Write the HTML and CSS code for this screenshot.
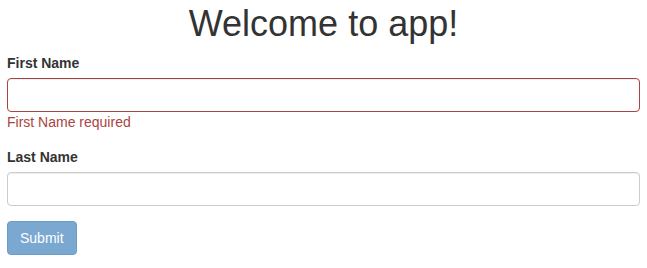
FILE: index.html
```html
<!DOCTYPE html>
<html>
<head>
<meta charset="utf-8">
<link rel="stylesheet" href="styles.css">
</head>
<body>
<div class="container">
  <h1 class="title">Welcome to app!</h1>
  <form class="form">
    <div class="form-group has-error">
      <label class="label">First Name</label>
      <input class="input" type="text">
      <span class="help-block">First Name required</span>
    </div>
    <div class="form-group">
      <label class="label">Last Name</label>
      <input class="input" type="text">
    </div>
    <button class="btn" type="button" disabled>Submit</button>
  </form>
</div>
</body>
</html>
```
FILE: styles.css
```css
html, body {
  margin: 0;
  padding: 0;
  background: #fff;
}
body {
  font-family: "Liberation Sans", Arial, sans-serif;
  font-size: 14px;
  line-height: 20px;
  color: #333;
}
.container {
  padding: 0 7px;
}
.title {
  margin: 4px 0 9px;
  font-size: 36px;
  font-weight: normal;
  line-height: 39.6px;
  text-align: center;
  color: #333;
}
.form {
  display: flex;
  flex-direction: column;
  align-items: flex-start;
}
.form-group {
  align-self: stretch;
  display: flex;
  flex-direction: column;
  align-items: flex-start;
  margin-bottom: 15px;
}
.has-error {
  margin-bottom: 15px;
}
.label {
  display: block;
  font-weight: bold;
  margin-bottom: 5px;
  line-height: 20px;
}
.input {
  box-sizing: border-box;
  align-self: stretch;
  height: 34px;
  margin: 0;
  padding: 6px 12px;
  font-family: inherit;
  font-size: 14px;
  border: 1px solid #ccc;
  border-radius: 4px;
  box-shadow: inset 0 1px 1px rgba(0,0,0,.075);
  background: #fff;
}
.has-error .input {
  border-color: #a94442;
}
.help-block {
  display: block;
  margin-top: 0;
  color: #a94442;
  line-height: 20px;
}
.btn {
  box-sizing: border-box;
  height: 34px;
  padding: 6px 12px;
  font-family: inherit;
  font-size: 14px;
  line-height: 20px;
  color: #fff;
  background: #7aa8d0;
  border: 1px solid #6d9cc9;
  border-radius: 4px;
  margin: 0;
}
```
